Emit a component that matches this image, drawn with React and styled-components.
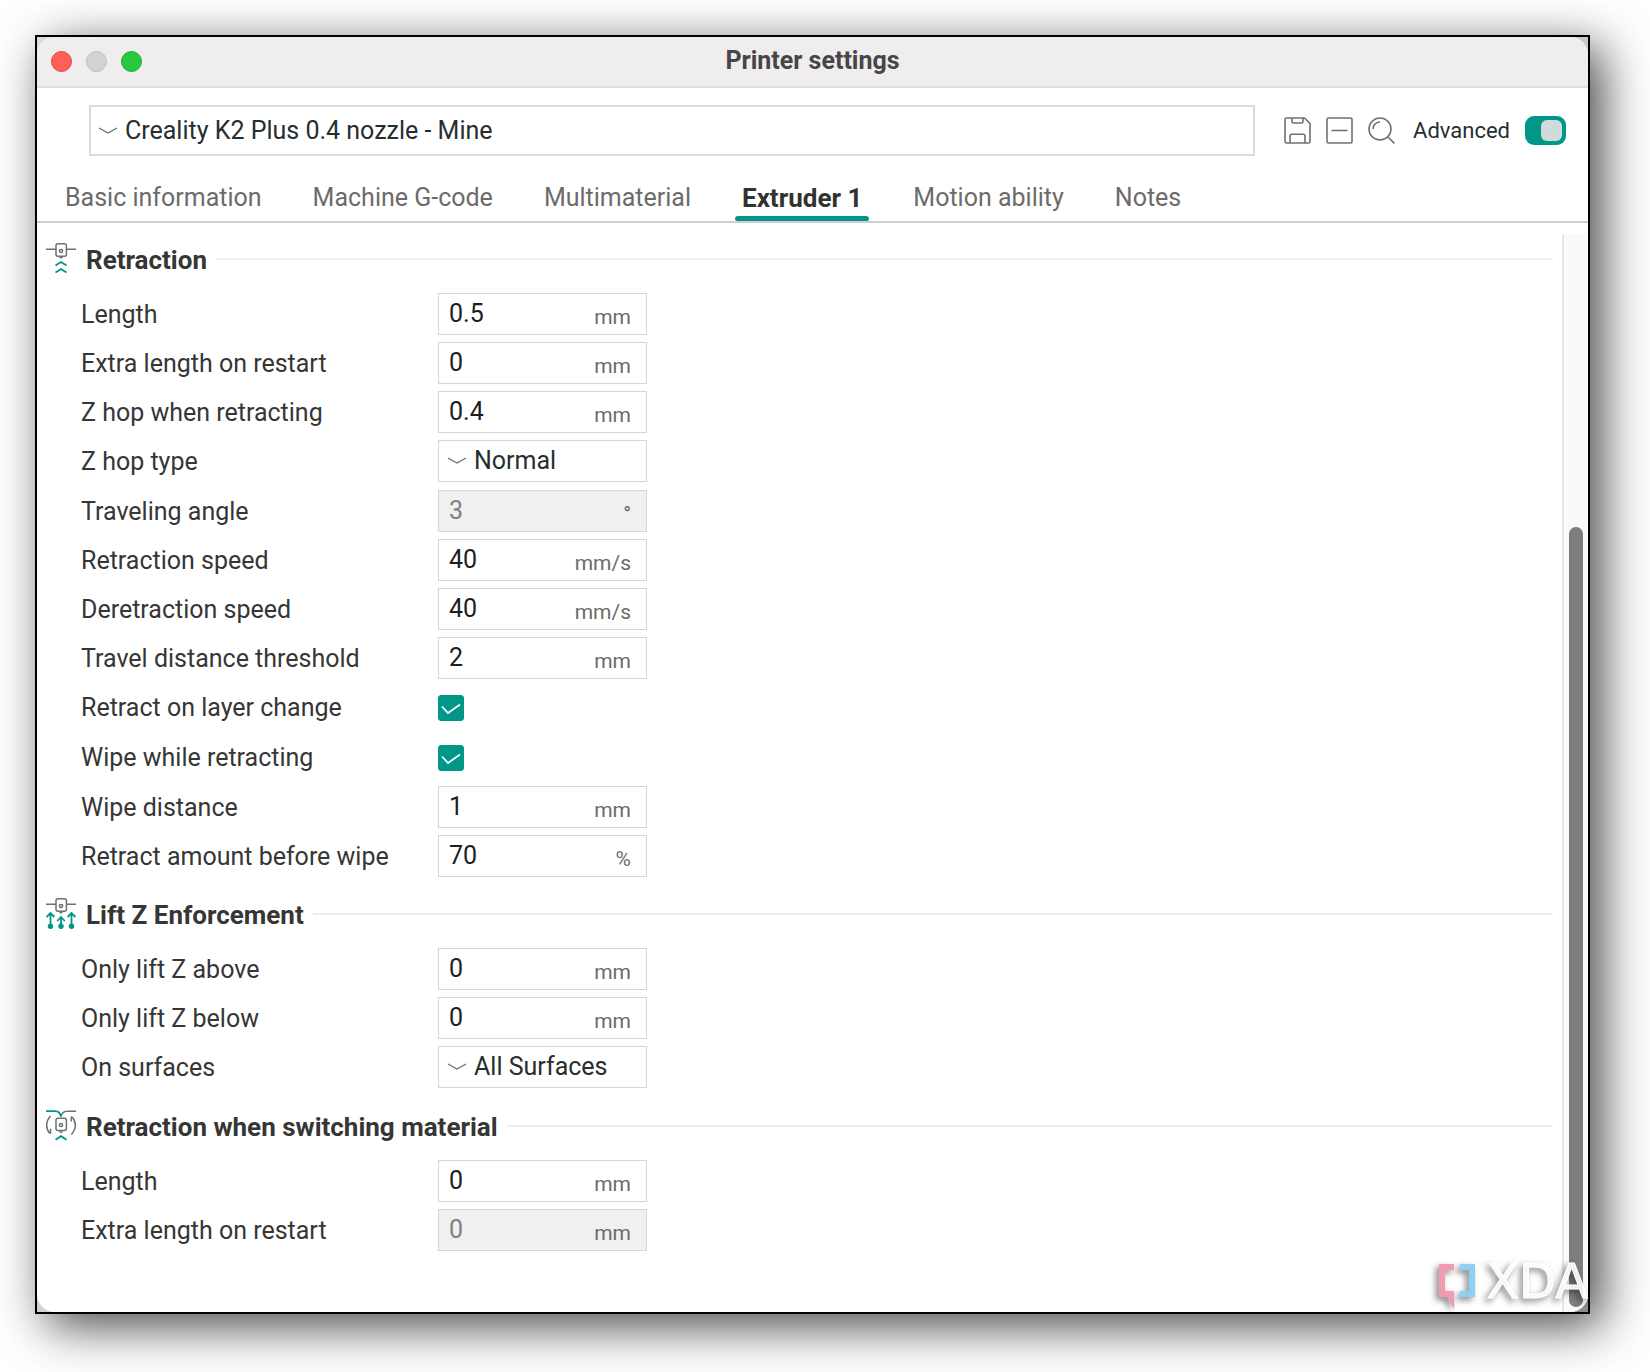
import { useId, useState } from "react"
import styled, { createGlobalStyle } from "styled-components"

const tabs = ["Basic information", "Machine G-code", "Multimaterial", "Extruder 1", "Motion ability", "Notes"]

const groups = [
    {
        title: "Retraction",
        icon: "retract",
        fields: [
            { label: "Length", value: "0.5", unit: "mm" },
            { label: "Extra length on restart", value: "0", unit: "mm" },
            { label: "Z hop when retracting", value: "0.4", unit: "mm" },
            { label: "Z hop type", options: ["Normal", "Slope", "Spiral", "Auto"] },
            { label: "Traveling angle", value: "3", unit: "°", disabled: true },
            { label: "Retraction speed", value: "40", unit: "mm/s" },
            { label: "Deretraction speed", value: "40", unit: "mm/s" },
            { label: "Travel distance threshold", value: "2", unit: "mm" },
            { label: "Retract on layer change", checked: true },
            { label: "Wipe while retracting", checked: true },
            { label: "Wipe distance", value: "1", unit: "mm" },
            { label: "Retract amount before wipe", value: "70", unit: "%" },
        ],
    },
    {
        title: "Lift Z Enforcement",
        icon: "lift",
        fields: [
            { label: "Only lift Z above", value: "0", unit: "mm" },
            { label: "Only lift Z below", value: "0", unit: "mm" },
            { label: "On surfaces", options: ["All Surfaces", "Top Only", "Bottom Only"] },
        ],
    },
    {
        title: "Retraction when switching material",
        icon: "switch",
        fields: [
            { label: "Length", value: "0", unit: "mm" },
            { label: "Extra length on restart", value: "0", unit: "mm", disabled: true },
        ],
    },
]

const Chevron = () => (
    <ChevronIcon viewBox="0 0 20 8" aria-hidden="true">
        <path d="M1 1 L10 6 L19 1" />
    </ChevronIcon>
)

const GroupIcon = ({ kind }) => (
    <GroupSvg viewBox="0 0 30 32" aria-hidden="true">
        {kind === "retract" && (
            <>
                <g stroke="#6b7272">
                    <path d="M0 6.3 H10 M20 6.3 H30" />
                    <rect x="10" y="0.8" width="10.4" height="12.4" rx="2" />
                    <circle cx="15" cy="8" r="1.6" />
                    <path d="M13.4 14.6 H16.6" />
                </g>
                <path stroke="#009688" strokeWidth="1.8" d="M9.5 22.5 L15 19 L20.5 22.5 M9.5 29.5 L15 26 L20.5 29.5" />
            </>
        )}
        {kind === "lift" && (
            <>
                <g stroke="#6b7272">
                    <path d="M0 6.3 H10 M20 6.3 H30" />
                    <rect x="10" y="0.8" width="10.4" height="12.4" rx="2" />
                    <circle cx="15" cy="8" r="1.6" />
                    <path d="M13.4 14.6 H16.6" />
                </g>
                <g stroke="#009688" strokeWidth="1.8">
                    <path d="M4.5 27 V16 M0.6 19 L4.5 15 L8.4 19" />
                    <path d="M15 27 V20 M11.2 23 L15 19 L18.8 23" />
                    <path d="M25.5 27 V16 M21.6 19 L25.5 15 L29.4 19" />
                </g>
                <g fill="#009688">
                    <circle cx="4.5" cy="28.2" r="2.7" />
                    <circle cx="15" cy="28.2" r="2.7" />
                    <circle cx="25.5" cy="28.2" r="2.7" />
                </g>
            </>
        )}
        {kind === "switch" && (
            <>
                <g stroke="#6b7272">
                    <path d="M30 1.2 H21 Q16 1.4 15 6.5" />
                    <rect x="10" y="8.2" width="10.4" height="12.4" rx="2" />
                    <circle cx="15" cy="15" r="1.6" />
                    <path d="M13.4 22 H16.6" />
                    <path d="M4.4 6 Q-2.8 14.5 3.6 23.4 M4.4 23.8 L4.6 18.8" />
                    <path d="M25.4 24.4 Q32.8 16 26.4 7 M25.4 6.4 L25.2 11.4" />
                </g>
                <path stroke="#009688" strokeWidth="1.8" d="M0 1.2 H9 Q14 1.4 15 6.5 M9.5 29.8 L15 26.2 L20.5 29.8" />
            </>
        )}
    </GroupSvg>
)

const Field = ({ field }) => {
    const id = useId()

    if (field.options) {
        return (
            <Row $tall>
                <Label htmlFor={id}>{field.label}</Label>
                <SelectBox>
                    <Chevron />
                    <Select id={id}>
                        {field.options.map((option) => (
                            <option key={option}>{option}</option>
                        ))}
                    </Select>
                </SelectBox>
            </Row>
        )
    }

    if (field.checked !== undefined) {
        return (
            <Row $tall>
                <Label htmlFor={id}>{field.label}</Label>
                <CheckWrap>
                    <Checkbox id={id} type="checkbox" defaultChecked={field.checked} />
                    <Tick viewBox="0 0 26 26" aria-hidden="true">
                        <path d="M4 11.5 L10 18 L22 9.5" />
                    </Tick>
                </CheckWrap>
            </Row>
        )
    }

    return (
        <Row>
            <Label htmlFor={id}>{field.label}</Label>
            <Box $disabled={field.disabled}>
                <TextInput id={id} type="text" defaultValue={field.value} disabled={field.disabled} />
                <Unit>{field.unit}</Unit>
            </Box>
        </Row>
    )
}

const App = () => {
    const [activeTab, setActiveTab] = useState("Extruder 1")

    return (
        <>
            <GlobalStyle />
            <Frame>
                <Window>
                    <TitleBar>
                        <Lights>
                            <Light $color="#ff5f57" $edge="#e2463f" aria-label="Close" />
                            <Light $color="#d4d2d3" $edge="#bdbbbc" aria-label="Minimize" />
                            <Light $color="#28c840" $edge="#1aab29" aria-label="Zoom" />
                        </Lights>
                        <Title>Printer settings</Title>
                    </TitleBar>

                    <Toolbar>
                        <PresetBox>
                            <Chevron />
                            <Select aria-label="Printer preset">
                                <option>Creality K2 Plus 0.4 nozzle - Mine</option>
                            </Select>
                        </PresetBox>
                        <Tools>
                            <ToolButton aria-label="Save preset">
                                <svg viewBox="0 0 27 27">
                                    <path d="M2.5 1 H20.5 L26 6.5 V24.5 Q26 26 24.5 26 H2.5 Q1 26 1 24.5 V2.5 Q1 1 2.5 1 Z" />
                                    <path d="M8 1 V4.5 Q8 6 9.5 6 H17.5 Q19 6 19 4.5 V1" />
                                    <path d="M6 26 V19 Q6 17.2 7.8 17.2 H19.2 Q21 17.2 21 19 V26" />
                                </svg>
                            </ToolButton>
                            <ToolButton aria-label="Delete preset">
                                <svg viewBox="0 0 27 27">
                                    <rect x="1" y="1" width="25" height="25" rx="1.5" />
                                    <path d="M5.5 13.5 H21.5" />
                                </svg>
                            </ToolButton>
                            <ToolButton aria-label="Search">
                                <svg viewBox="0 0 27 27">
                                    <circle cx="12" cy="12" r="11" />
                                    <path d="M5 12 Q5.4 5.6 12 5 M20 20 L26.4 26.4" />
                                </svg>
                            </ToolButton>
                        </Tools>
                        <ModeLabel>
                            Advanced
                            <Toggle type="checkbox" role="switch" defaultChecked />
                        </ModeLabel>
                    </Toolbar>

                    <TabBar role="tablist">
                        {tabs.map((tab) => (
                            <Tab
                                key={tab}
                                role="tab"
                                aria-selected={tab === activeTab}
                                $active={tab === activeTab}
                                onClick={() => setActiveTab(tab)}
                            >
                                {tab}
                            </Tab>
                        ))}
                    </TabBar>

                    <Body>
                        <Content>
                            {groups.map((group) => (
                                <Group key={group.title}>
                                    <GroupHeader>
                                        <GroupIcon kind={group.icon} />
                                        <GroupTitle>{group.title}</GroupTitle>
                                        <Rule />
                                    </GroupHeader>
                                    {group.fields.map((field) => (
                                        <Field key={field.label} field={field} />
                                    ))}
                                </Group>
                            ))}
                        </Content>
                        <Track>
                            <Thumb />
                        </Track>
                    </Body>
                </Window>

                <Watermark>
                    <svg viewBox="0 0 37 46" aria-hidden="true">
                        <path fill="#f29bb0" d="M0 0 H15 V6 H6 V27 H15 V45 L8 33 H0 Z" />
                        <path fill="#8fd0f2" d="M21 0 H36 V33 H21 V27 H30 V6 H21 Z" />
                    </svg>
                    <span>XDA</span>
                </Watermark>
            </Frame>
        </>
    )
}

export default App


const GlobalStyle = createGlobalStyle`
* {
    box-sizing: border-box;
}
body {
    margin: 0;
    background: #fff;
    overflow-x: hidden;
}
body, button, input, select {
    font-family: Roboto, "Liberation Sans", sans-serif;
    font-size: 25px;
    line-height: 30px;
}
`
const Frame = styled.div`
position: relative;
margin: 35px 60px 60px 35px;
border: 2px solid #000;
background: linear-gradient(135deg, #dcdcdc, #d0d0d0 50%, #8c8c8c);
box-shadow: 12px 12px 46px rgba(0, 0, 0, 0.72);
`
const Window = styled.div`
border-radius: 18px;
background: #fff;
overflow: hidden;
`
const TitleBar = styled.header`
display: grid;
grid-template-columns: 1fr auto 1fr;
align-items: center;
height: 51px;
padding: 0 14px;
background: #efedee;
border-bottom: 2px solid #dedede;
`
const Lights = styled.div`
display: flex;
gap: 14px;
`
const Light = styled.button`
width: 21px;
height: 21px;
padding: 0;
border: 1px solid ${(props) => props.$edge};
border-radius: 50%;
background: ${(props) => props.$color};
`
const Title = styled.h1`
margin: 0;
padding-bottom: 2px;
font-size: 25px;
line-height: 30px;
font-weight: 700;
color: #464646;
`
const Toolbar = styled.div`
display: flex;
align-items: center;
padding: 17px 22px 0 52px;
`
const Box = styled.div`
display: flex;
align-items: center;
height: 42px;
padding: 0 15px 0 10px;
border: 1px solid #d6d6d6;
background: ${(props) => (props.$disabled ? "#f0f0f0" : "#fff")};
`
const SelectBox = styled(Box)`
padding-left: 8px;
`
const PresetBox = styled(Box)`
flex: 1;
height: 51px;
padding-left: 7px;
border: 2px solid #dbdbdb;
`
const ChevronIcon = styled.svg`
flex: none;
width: 20px;
height: 8px;
margin-right: 7px;
fill: none;
stroke: #6b7272;
stroke-width: 1.4;
`
const Select = styled.select`
flex: 1;
min-width: 0;
padding: 0;
border: 0;
outline: 0;
appearance: none;
background: transparent;
color: #262e30;
`
const Tools = styled.div`
display: flex;
gap: 15px;
margin: 0 18px 0 29px;
`
const ToolButton = styled.button`
width: 27px;
height: 27px;
padding: 0;
border: 0;
background: none;
svg {
    display: block;
    fill: none;
    stroke: #6b7272;
    stroke-width: 1.6;
}
`
const ModeLabel = styled.label`
display: flex;
align-items: center;
gap: 15px;
font-size: 22px;
color: #262e30;
`
const Toggle = styled.input`
display: flex;
align-items: center;
justify-content: flex-end;
width: 41px;
height: 29px;
margin: 0;
padding: 0 4px;
border-radius: 9px;
appearance: none;
background: #009688;
&::before {
    content: "";
    width: 21px;
    height: 21px;
    border-radius: 6px;
    background: #d0dcdb;
}
&:not(:checked) {
    justify-content: flex-start;
    background: #a6a9aa;
}
`
const TabBar = styled.div`
display: flex;
gap: 37px;
margin-top: 16px;
padding-left: 21px;
border-bottom: 2px solid #cecece;
`
const Tab = styled.button`
position: relative;
height: 49px;
padding: 2px 7px 0;
border: 0;
background: none;
white-space: nowrap;
font-size: ${(props) => (props.$active ? 26 : 25)}px;
font-weight: ${(props) => (props.$active ? 700 : 400)};
color: ${(props) => (props.$active ? "#323232" : "#6b6b6b")};
&::after {
    content: "";
    display: ${(props) => (props.$active ? "block" : "none")};
    position: absolute;
    left: 0;
    right: 0;
    bottom: 0;
    height: 5px;
    border-radius: 3px 3px 2px 2px;
    background: #009688;
}
`
const Body = styled.div`
display: flex;
padding-top: 11px;
`
const Content = styled.main`
flex: 1;
display: flex;
flex-direction: column;
gap: 14px;
padding: 9px 9px 54px 9px;
`
const Group = styled.section`
display: flex;
flex-direction: column;
`
const GroupHeader = styled.div`
display: flex;
align-items: center;
height: 32px;
margin-bottom: 18px;
`
const GroupSvg = styled.svg`
flex: none;
width: 30px;
height: 32px;
fill: none;
stroke-width: 1.5;
`
const GroupTitle = styled.h2`
margin: 0 9px 0 10px;
padding-top: 2px;
font-size: 26px;
line-height: 30px;
font-weight: 700;
color: #363636;
`
const Rule = styled.div`
flex: 1;
height: 2px;
background: #eee;
`
const Row = styled.div`
display: grid;
grid-template-columns: 357px 209px;
align-items: start;
height: ${(props) => (props.$tall ? 50 : 49)}px;
padding-left: 35px;
`
const Label = styled.label`
line-height: 44px;
color: #363636;
`
const TextInput = styled.input`
flex: 1;
min-width: 0;
padding: 0;
border: 0;
outline: 0;
background: transparent;
color: #1e1e1e;
&:disabled {
    color: #808080;
}
`
const Unit = styled.span`
padding-top: 5px;
font-size: 21px;
color: #6b6b6b;
`
const CheckWrap = styled.div`
position: relative;
width: 26px;
height: 26px;
margin-top: 9px;
`
const Checkbox = styled.input`
display: block;
width: 26px;
height: 26px;
margin: 0;
border-radius: 3px;
appearance: none;
background: #fff;
border: 1px solid #d6d6d6;
&:checked {
    background: #009688;
    border-color: #009688;
}
`
const Tick = styled.svg`
position: absolute;
inset: 0;
fill: none;
stroke: #fff;
stroke-width: 1.8;
pointer-events: none;
`
const Track = styled.div`
display: flex;
flex-direction: column;
width: 26px;
padding: 0 5px 5px;
border-left: 2px solid #e8e8e8;
background: #fafafa;
&::before {
    content: "";
    flex: 3;
}
`
const Thumb = styled.div`
flex: 8;
border-radius: 7px;
background: #7e7e7e;
`
const Watermark = styled.div`
position: absolute;
right: 0;
bottom: 2px;
display: flex;
align-items: flex-start;
gap: 10px;
filter: drop-shadow(-3px 3px 3px rgba(0, 0, 0, 0.5));
svg {
    width: 37px;
    height: 46px;
}
span {
    font-family: "DejaVu Sans", sans-serif;
    font-size: 48px;
    line-height: 34px;
    color: rgba(255, 255, 255, 0.9);
    -webkit-text-stroke: 1px #fff;
}
`
